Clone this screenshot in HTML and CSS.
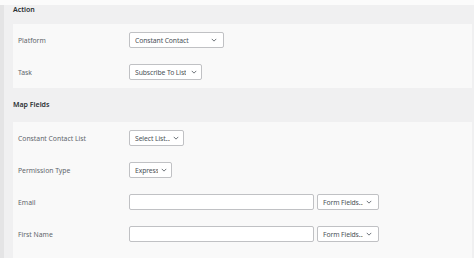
FILE: index.html
```html
<!DOCTYPE html>
<html lang="en">

<head>
	<meta charset="UTF-8">
	<meta name="viewport" content="width=device-width, initial-scale=1.0">
	<title>Integration Settings</title>
	<link rel="stylesheet" href="styles.css">
</head>

<body>
	<div class="settings-page">
		<h3 class="section-title section-title-first">Action</h3>
		<div class="panel">
			<div class="field-row">
				<span class="field-label">Platform</span>
				<div class="select-box w-platform">
					<span class="select-text">Constant Contact</span>
					<svg class="chevron" viewBox="0 0 8 5"><path d="M1 1l3 3 3-3" /></svg>
				</div>
			</div>
			<div class="field-row">
				<span class="field-label">Task</span>
				<div class="select-box w-task">
					<span class="select-text">Subscribe To List</span>
					<svg class="chevron" viewBox="0 0 8 5"><path d="M1 1l3 3 3-3" /></svg>
				</div>
			</div>
		</div>

		<h3 class="section-title">Map Fields</h3>
		<div class="panel panel-last">
			<div class="field-row">
				<span class="field-label">Constant Contact List</span>
				<div class="select-box w-list">
					<span class="select-text">Select List...</span>
					<svg class="chevron" viewBox="0 0 8 5"><path d="M1 1l3 3 3-3" /></svg>
				</div>
			</div>
			<div class="field-row">
				<span class="field-label">Permission Type</span>
				<div class="select-box w-perm">
					<span class="select-text">Express</span>
					<svg class="chevron" viewBox="0 0 8 5"><path d="M1 1l3 3 3-3" /></svg>
				</div>
			</div>
			<div class="field-row">
				<span class="field-label">Email</span>
				<input type="text" class="text-input">
				<div class="select-box w-fields">
					<span class="select-text">Form Fields...</span>
					<svg class="chevron" viewBox="0 0 8 5"><path d="M1 1l3 3 3-3" /></svg>
				</div>
			</div>
			<div class="field-row">
				<span class="field-label">First Name</span>
				<input type="text" class="text-input">
				<div class="select-box w-fields">
					<span class="select-text">Form Fields...</span>
					<svg class="chevron" viewBox="0 0 8 5"><path d="M1 1l3 3 3-3" /></svg>
				</div>
			</div>
		</div>
	</div>
</body>

</html>
```

FILE: styles.css
```css
html,
body {
	margin: 0;
	height: 100%;
	overflow: hidden;
	background-color: #fbfbfb;
	font-family: "Noto Sans", "Open Sans", sans-serif;
	color: #5f656b;
}

/* Page */

.settings-page {
	margin-top: 5px;
	border-left: 4px solid #e4e4e5;
	background-color: #f0f0f1;
}

/* Section headings */

.section-title {
	margin: 0;
	height: 34px;
	box-sizing: border-box;
	padding: 12px 0 0 9px;
	font-size: 7px;
	font-weight: 600;
	color: #2a2f33;
}

.section-title-first {
	height: 19px;
	padding-top: 0;
	line-height: 9px;
}

/* Panels */

.panel {
	margin: 0 2px 0 9px;
	background-color: #f9f9f9;
}

.panel-last {
	height: 136px;
}

.field-row {
	height: 32px;
	display: flex;
	align-items: center;
	padding-left: 5px;
	font-size: 6.8px;
}

.field-label {
	width: 111px;
	flex-shrink: 0;
}

/* Controls */

.select-box {
	height: 16px;
	box-sizing: border-box;
	display: flex;
	align-items: center;
	justify-content: space-between;
	padding: 0 4px 0 5px;
	background-color: #fff;
	border: 1px solid #c0c1c4;
	border-radius: 2px;
	color: #4a5056;
	white-space: nowrap;
}

.select-text {
	overflow: hidden;
	letter-spacing: -0.1px;
}

.chevron {
	width: 6px;
	height: 4px;
	margin-left: 3px;
	flex-shrink: 0;
	fill: none;
	stroke: #5f656b;
	stroke-width: 1.2;
}

.w-platform {
	width: 95px;
	padding-right: 6px;
}

.w-task {
	width: 73px;
}

.w-list {
	width: 55px;
}

.w-perm {
	width: 43px;
}

.w-fields {
	width: 62px;
	margin-left: 3px;
	padding-right: 6px;
}

.text-input {
	width: 185px;
	height: 16px;
	box-sizing: border-box;
	margin: 0;
	padding: 0 4px;
	border: 1px solid #c0c1c4;
	border-radius: 2px;
	background-color: #fff;
}
```
